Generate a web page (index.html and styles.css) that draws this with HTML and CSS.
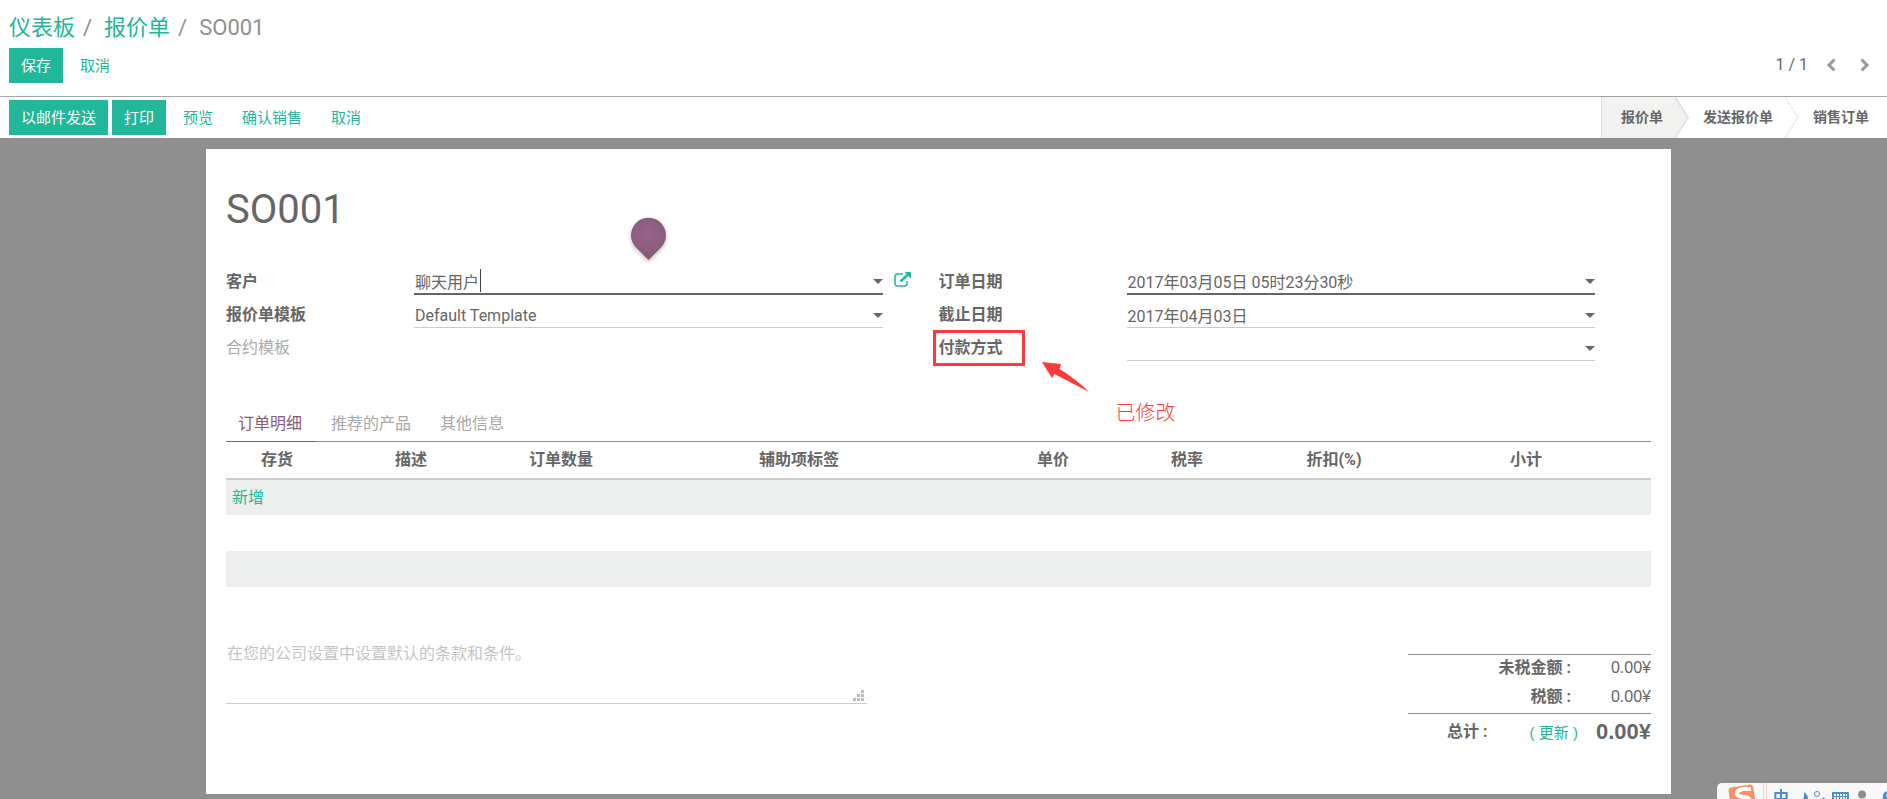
FILE: index.html
```html
<!DOCTYPE html>
<html lang="zh-CN">
<head>
    <meta charset="UTF-8">
    <meta name="viewport" content="width=device-width, initial-scale=1.0">
    <title>SO001</title>
    <link rel="stylesheet" href="styles.css">
</head>
<body>
    <header class="control-panel">
        <nav class="breadcrumb">
            <a href="#">仪表板</a><span class="sep">/</span><a href="#">报价单</a><span class="sep">/</span><span>SO001</span>
        </nav>
        <div class="panel-row">
            <div class="buttons">
                <button class="btn primary">保存</button>
                <button class="btn">取消</button>
            </div>
            <div class="pager">
                <span>1 / 1</span>
                <button class="pager-btn" aria-label="上一个">
                    <svg width="10" height="14" viewBox="0 0 10 14"><path d="M8.500 1.500L3 7l5.500 5.500" /></svg>
                </button>
                <button class="pager-btn" aria-label="下一个">
                    <svg width="10" height="14" viewBox="0 0 10 14"><path d="M1.500 1.500L7 7l-5.500 5.500" /></svg>
                </button>
            </div>
        </div>
    </header>

    <div class="statusbar">
        <div class="buttons">
            <button class="btn primary">以邮件发送</button>
            <button class="btn primary">打印</button>
            <button class="btn">预览</button>
            <button class="btn">确认销售</button>
            <button class="btn">取消</button>
        </div>
        <ol class="steps">
            <li class="active">报价单<svg class="tip" width="14" height="41" viewBox="0 0 14 41"><path d="M0 0L13 20.500L0 41" /></svg></li>
            <li>发送报价单<svg class="tip" width="14" height="41" viewBox="0 0 14 41"><path d="M0 0L13 20.500L0 41" /></svg></li>
            <li>销售订单</li>
        </ol>
    </div>

    <main class="sheet-bg">
        <div class="sheet">
            <h1>SO001</h1>

            <form class="fields">
                <div class="group">
                    <label for="customer">客户</label>
                    <div class="field">
                        <input class="required" type="text" id="customer" value="聊天用户">
                        <span class="cursor"></span>
                        <svg class="pin" width="43" height="50" viewBox="0 0 43 50">
                            <defs>
                                <radialGradient id="pinFill" gradientUnits="userSpaceOnUse" cx="21" cy="21" r="21">
                                    <stop offset="0" stop-color="#966489" />
                                    <stop offset="1" stop-color="#875a7b" />
                                </radialGradient>
                            </defs>
                            <path d="M21.500 46L9 33.500A17.500 17.500 0 1 1 34 33.500Z" fill="url(#pinFill)" />
                        </svg>
                    </div>
                    <a class="external" href="#" aria-label="打开">
                        <svg width="17" height="15" viewBox="0 0 17 15">
                            <path class="frame" d="M9 2H3.500Q1 2 1 4.500v7Q1 14 3.500 14h7Q13 14 13 11.500V9" />
                            <path class="shaft" d="M6.500 9.500L14 2.500" />
                            <path class="head" d="M10.500 0H17v6.500z" />
                        </svg>
                    </a>

                    <label for="template">报价单模板</label>
                    <div class="field">
                        <select id="template"><option>Default Template</option></select>
                    </div>

                    <span class="muted">合约模板</span>
                </div>

                <div class="group">
                    <label for="orderDate">订单日期</label>
                    <div class="field">
                        <input class="required" type="text" id="orderDate" value="2017年03月05日 05时23分30秒">
                    </div>

                    <label for="expiry">截止日期</label>
                    <div class="field">
                        <input type="text" id="expiry" value="2017年04月03日">
                    </div>

                    <label class="marked" for="payment">付款方式
                        <span class="mark-box"></span>
                        <svg class="mark-arrow" width="48" height="32" viewBox="0 0 48 32"><path d="M0 0L19 2L17.500 7Q34 17 47 30Q30 21 12.500 12L10 16Z" /></svg>
                        <span class="mark-text">已修改</span>
                    </label>
                    <div class="field">
                        <select id="payment"><option></option></select>
                    </div>
                </div>
            </form>

            <nav class="tabs">
                <a class="active" href="#">订单明细</a>
                <a href="#">推荐的产品</a>
                <a href="#">其他信息</a>
            </nav>

            <table class="lines">
                <colgroup>
                    <col class="w-s"><col class="w-l"><col class="w-m"><col><col class="w-l"><col class="w-s"><col class="w-xl"><col class="w-xl"><col class="w-icon">
                </colgroup>
                <thead>
                    <tr>
                        <th>存货</th>
                        <th>描述</th>
                        <th>订单数量</th>
                        <th>辅助项标签</th>
                        <th>单价</th>
                        <th>税率</th>
                        <th>折扣(%)</th>
                        <th>小计</th>
                        <th></th>
                    </tr>
                </thead>
                <tbody>
                    <tr><td colspan="9"><a href="#">新增</a></td></tr>
                    <tr><td colspan="9"></td></tr>
                    <tr><td colspan="9"></td></tr>
                </tbody>
            </table>

            <div class="footer">
                <div class="note">
                    <textarea aria-label="条款和条件" placeholder="在您的公司设置中设置默认的条款和条件。"></textarea>
                    <svg class="grip" width="11" height="11" viewBox="0 0 11 11">
                        <path d="M8 0h3v3H8zM4 4h3v3H4zM8 4h3v3H8zM0 8h3v3H0zM4 8h3v3H4zM8 8h3v3H8z" />
                    </svg>
                </div>
                <dl class="totals">
                    <div class="line"><dt>未税金额 :</dt><dd>0.00¥</dd></div>
                    <div class="line"><dt>税额 :</dt><dd>0.00¥</dd></div>
                    <div class="line total">
                        <dt>总计 :</dt>
                        <dd><button class="update" type="button">( 更新 )</button><b>0.00¥</b></dd>
                    </div>
                </dl>
            </div>
        </div>
    </main>

    <!-- input method bar, partly below the window edge -->
    <div class="ime">
        <svg width="36" height="32" viewBox="0 0 36 32">
            <rect x="7" y="3" width="25" height="27" rx="3" fill="#f79263" transform="rotate(-9 19 16)" />
            <path d="M28 6Q13 5 14 11Q15 14 22 14Q28 15 26 20Q24 24 13 22" fill="none" stroke="#fff" stroke-width="4" />
        </svg>
        <span class="ime-lines"></span>
        <span class="ime-lang">中</span>
        <svg width="97" height="28" viewBox="0 0 97 28">
            <path d="M14 9Q20 13 17 20Q14 26 6 23Q15 20 14 9Z" fill="#4a90d0" />
            <circle cx="27" cy="11" r="2.500" fill="none" stroke="#4a90d0" />
            <path d="M33 15q3 3 0 6" fill="none" stroke="#4a90d0" stroke-width="2" />
            <rect x="42" y="9" width="17" height="11" rx="1" fill="#4a90d0" />
            <path d="M44 12h13M44 15h13" stroke="#f8f8f8" stroke-width="2" stroke-dasharray="2 1" />
            <circle cx="72" cy="11.500" r="4" fill="#8f8f8f" />
            <path d="M66 22q0-6 6-6t6 6z" fill="#8f8f8f" />
            <path d="M86 22l7-7q-1-6 5-7l-2 5 3 2v4q-3 1-5 0l-5 5z" fill="#4a90d0" />
        </svg>
    </div>
</body>
</html>
```

FILE: styles.css
```css
* {
    box-sizing: border-box;
}
body {
    margin: 0;
    min-height: 100vh;
    display: flex;
    flex-direction: column;
    font-family: Roboto, "Noto Sans CJK SC", sans-serif;
    font-size: 16px;
    line-height: 26px;
    color: #666;
    background-color: #fff;
}
a {
    color: #21b799;
    text-decoration: none;
}
button, input, select, textarea {
    font-family: inherit;
    color: inherit;
}

/* top bars */
.control-panel {
    padding: 12px 9px 13px;
    border-bottom: 1px solid #a5a5a5;
}
.breadcrumb {
    font-size: 22px;
    line-height: 32px;
    color: #8f8f8f;
}
.breadcrumb .sep {
    padding: 0 12px 0 8px;
}
.panel-row {
    display: flex;
    justify-content: space-between;
    align-items: center;
    margin-top: 4px;
}
.buttons {
    display: flex;
    gap: 3px;
}
.btn {
    height: 35px;
    padding: 0 13px 2px;
    border: 0;
    background: none;
    font-size: 15px;
    color: #21b799;
}
.btn.primary {
    padding: 0 12px 2px;
    border: 0 solid #21b799;
    background-color: #21b799;
    color: #fff;
}
.btn.primary + .btn {
    margin-left: 1px;
}
.pager {
    display: flex;
    align-items: center;
    padding: 0 2px 2px 0;
}
.pager-btn {
    display: flex;
    margin-left: 12px;
    padding: 6px;
    border: 0;
    background: none;
}
.pager-btn path {
    fill: none;
    stroke: #999;
    stroke-width: 3;
}
.statusbar {
    display: flex;
    justify-content: space-between;
    align-items: center;
    height: 41px;
    padding-left: 9px;
}
.steps {
    display: flex;
    margin: 0;
    padding: 0;
    list-style: none;
    font-size: 14px;
    font-weight: bold;
    line-height: 41px;
}
.steps li {
    position: relative;
    padding: 0 12px 0 28px;
}
.steps li:last-child {
    padding-right: 18px;
}
.steps .active {
    padding-left: 19px;
    border-left: 1px solid #ddd;
    background-color: #f2f2f0;
}
.tip {
    position: absolute;
    top: 0;
    left: 100%;
    fill: #fff;
    stroke: #e2e2e0;
}
.active .tip {
    z-index: 1;
    fill: #f2f2f0;
    stroke-width: 2;
}

/* sheet */
.sheet-bg {
    flex: 1;
    padding: 11px 216px 6px 206px;
    background-color: #8f8f8f;
}
.sheet {
    padding: 37px 20px 45px;
    background-color: #fff;
}
h1 {
    margin: 0 0 28px;
    font-size: 40px;
    font-weight: normal;
    line-height: 48px;
}
.fields {
    display: grid;
    grid-template-columns: 1fr 1fr;
}
.group {
    display: grid;
    grid-template-columns: 188px 1fr 56px;
    grid-auto-rows: 33px;
    align-items: end;
    align-content: start;
}
.group label, .muted {
    grid-column: 1;
    font-weight: bold;
}
.group .muted {
    font-weight: normal;
    color: #aaa;
}
.field {
    position: relative;
}
.field input, .field select {
    display: block;
    width: 100%;
    height: 26px;
    padding: 0 14px 0 1px;
    border: 0;
    border-bottom: 1px solid #ccc;
    border-radius: 0;
    outline: none;
    appearance: none;
    background: none;
    font-size: 16px;
}
.field select {
    padding-top: 2px;
}
.field .required {
    height: 27px;
    border-bottom: 2px solid #666;
}
.field::after {
    content: "";
    position: absolute;
    right: 0;
    top: 11px;
    border: 5px solid transparent;
    border-top-color: #666;
    border-bottom: 0;
    pointer-events: none;
}
.cursor {
    position: absolute;
    left: 66px;
    top: 1px;
    width: 1px;
    height: 23px;
    background-color: #444;
}
.pin {
    position: absolute;
    left: 50%;
    bottom: 31px;
    margin-left: -21px;
    filter: drop-shadow(0 2px 2px rgba(0, 0, 0, 0.25));
}
.external {
    display: flex;
    padding: 0 0 8px 11px;
}
.external .frame, .external .shaft {
    fill: none;
    stroke: #21b799;
    stroke-width: 1.5;
}
.external .shaft {
    stroke-width: 2.5;
}
.external .head {
    fill: #21b799;
}

/* review marks around the payment label */
.marked {
    position: relative;
}
.mark-box {
    position: absolute;
    left: -6px;
    top: -5px;
    width: 92px;
    height: 36px;
    border: 3px solid #ff3939;
}
.mark-arrow {
    position: absolute;
    left: 103px;
    top: 27px;
    fill: #ff3939;
}
.mark-text {
    position: absolute;
    left: 177px;
    top: 65px;
    font-size: 20px;
    font-weight: 300;
    white-space: nowrap;
    color: #ff3939;
}

/* order lines */
.tabs {
    display: flex;
    gap: 3px;
    margin-top: 43px;
    border-bottom: 1px solid #8f8f8f;
}
.tabs a {
    margin-bottom: -1px;
    padding: 7px 14px 4px 12px;
    border-bottom: 1px solid transparent;
    color: #a8a8a8;
}
.tabs .active {
    border-bottom-color: #875a7b;
    color: #875a7b;
}
.lines {
    width: 100%;
    table-layout: fixed;
    border-collapse: collapse;
}
.w-s { width: 102px; }
.w-m { width: 134px; }
.w-l { width: 166px; }
.w-xl { width: 192px; }
.w-icon { width: 29px; }
.lines th {
    height: 37px;
    padding: 0;
    border-bottom: 2px solid #ccc;
}
.lines td {
    height: 36px;
    padding: 0 6px;
}
.lines tbody tr:nth-child(odd) {
    background-color: #edefee;
}

/* terms and totals */
.footer {
    display: flex;
    justify-content: space-between;
    align-items: flex-start;
    margin-top: 53px;
}
.note {
    position: relative;
    width: 45%;
}
.note textarea {
    display: block;
    width: 100%;
    height: 64px;
    padding: 1px;
    border: 0;
    border-bottom: 1px solid #ccc;
    outline: none;
    resize: none;
    background: none;
    font-size: 16px;
    line-height: 26px;
}
.note textarea::placeholder {
    color: #c4c4c4;
}
.grip {
    position: absolute;
    right: 3px;
    bottom: 3px;
    fill: #bbb;
}
.totals {
    width: 243px;
    margin: 14px 0 0;
    border-top: 1px solid #8f8f8f;
}
.totals .line {
    display: flex;
    justify-content: flex-end;
    height: 29px;
}
.totals dt {
    font-weight: bold;
}
.totals dd {
    width: 80px;
    margin: 0;
    font-family: "Liberation Sans", "Noto Sans CJK SC", sans-serif;
    text-align: right;
}
.totals .total {
    height: 36px;
    align-items: center;
    border-top: 1px solid #8f8f8f;
}
.totals .total dd {
    display: flex;
    justify-content: space-between;
    align-items: center;
    width: auto;
    margin-left: 42px;
    gap: 18px;
}
.update {
    padding: 0;
    border: 0;
    background: none;
    font-size: 15px;
    color: #21b799;
}
.total b {
    font-size: 22px;
}

.ime {
    position: fixed;
    right: 0;
    bottom: 0;
    display: flex;
    width: 170px;
    height: 16px;
    padding-left: 6px;
    overflow: hidden;
    border-radius: 5px 0 0 0;
    background-color: #f8f8f8;
}
.ime svg {
    flex: none;
}
.ime-lines {
    flex: none;
    width: 4px;
    margin: 0 6px 0 4px;
    height: 16px;
    border: 1px solid #f5cfcf;
    border-width: 0 1px;
}
.ime-lang {
    flex: none;
    width: 17px;
    font-size: 16px;
    font-weight: bold;
    line-height: 30px;
    color: #4a90d0;
}
```
